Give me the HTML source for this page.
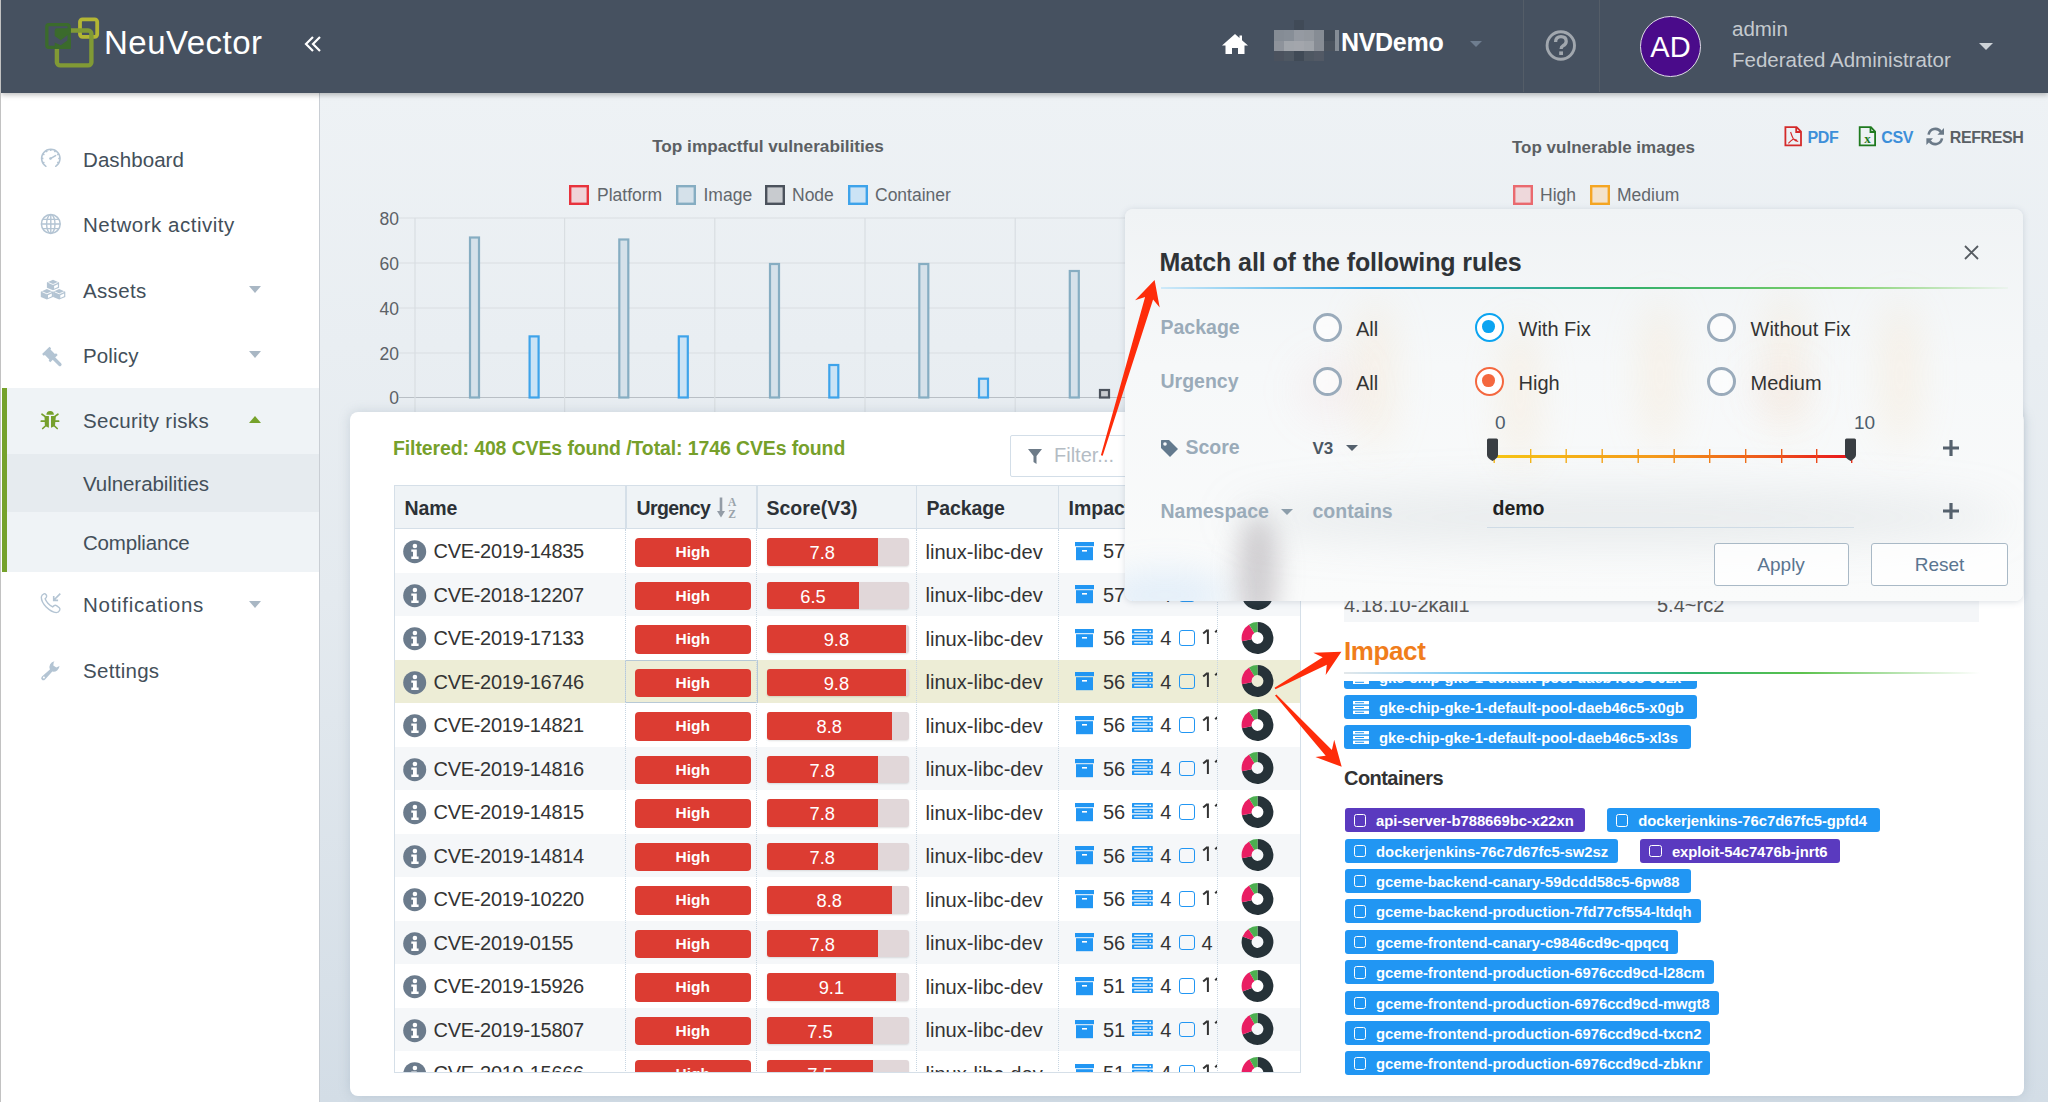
<!DOCTYPE html>
<html><head><meta charset="utf-8">
<style>
*{box-sizing:border-box;margin:0;padding:0}
html,body{width:2048px;height:1102px;overflow:hidden}
body{position:relative;font-family:"Liberation Sans",sans-serif;background:#fff;color:#333}
.a{position:absolute;white-space:nowrap}
#main{left:319px;top:92px;width:1729px;height:1010px;background:linear-gradient(#eef2f5 0%,#e4eaef 50%,#d3dde6 100%)}
#side{left:0;top:92px;width:320px;height:1010px;background:#fff;border-right:1.5px solid #c9ced4}
#side .edge{display:none}
#hdr{left:1.4px;top:0;width:2047px;height:92.6px;background:#465160;box-shadow:0 2px 5px rgba(0,0,0,.25)}
.nav{font-size:20.5px;color:#434f5a}
.caret{width:0;height:0;border-left:6px solid transparent;border-right:6px solid transparent;border-top:7px solid #a9b7c4}
</style></head>
<body>
<div id="main" class="a"></div>
<svg class="a" style="left:0;top:0" width="2048" height="1102">
<line x1="399" y1="218" x2="1300" y2="218" stroke="#d9dee2" stroke-width="1.2"/>
<text x="399" y="224.5" text-anchor="end" font-family="Liberation Sans" font-size="17.5" fill="#5c6166">80</text>
<line x1="399" y1="263" x2="1300" y2="263" stroke="#d9dee2" stroke-width="1.2"/>
<text x="399" y="269.5" text-anchor="end" font-family="Liberation Sans" font-size="17.5" fill="#5c6166">60</text>
<line x1="399" y1="308" x2="1300" y2="308" stroke="#d9dee2" stroke-width="1.2"/>
<text x="399" y="314.5" text-anchor="end" font-family="Liberation Sans" font-size="17.5" fill="#5c6166">40</text>
<line x1="399" y1="353" x2="1300" y2="353" stroke="#d9dee2" stroke-width="1.2"/>
<text x="399" y="359.5" text-anchor="end" font-family="Liberation Sans" font-size="17.5" fill="#5c6166">20</text>
<line x1="399" y1="397.5" x2="1300" y2="397.5" stroke="#b9bfc5" stroke-width="1.2"/>
<text x="399" y="404.0" text-anchor="end" font-family="Liberation Sans" font-size="17.5" fill="#5c6166">0</text>
<line x1="415" y1="218" x2="415" y2="412" stroke="#d9dee2" stroke-width="1.2"/>
<line x1="564.6" y1="218" x2="564.6" y2="412" stroke="#d9dee2" stroke-width="1.2"/>
<line x1="714.8" y1="218" x2="714.8" y2="412" stroke="#d9dee2" stroke-width="1.2"/>
<line x1="865" y1="218" x2="865" y2="412" stroke="#d9dee2" stroke-width="1.2"/>
<line x1="1015.2" y1="218" x2="1015.2" y2="412" stroke="#d9dee2" stroke-width="1.2"/>
<line x1="1165.4" y1="218" x2="1165.4" y2="412" stroke="#d9dee2" stroke-width="1.2"/>
<rect x="470" y="237.5" width="9" height="160.0" fill="#d5e1ea" stroke="#86adc2" stroke-width="2.2"/>
<rect x="619.3" y="239.5" width="9" height="158.0" fill="#d5e1ea" stroke="#86adc2" stroke-width="2.2"/>
<rect x="770" y="264" width="9" height="133.5" fill="#d5e1ea" stroke="#86adc2" stroke-width="2.2"/>
<rect x="919.3" y="264" width="9" height="133.5" fill="#d5e1ea" stroke="#86adc2" stroke-width="2.2"/>
<rect x="1069.8" y="271" width="9" height="126.5" fill="#d5e1ea" stroke="#86adc2" stroke-width="2.2"/>
<rect x="529.6" y="336.4" width="9" height="61.10000000000002" fill="#cbe3f5" stroke="#3ea3ea" stroke-width="2.2"/>
<rect x="678.8" y="336.4" width="9" height="61.10000000000002" fill="#cbe3f5" stroke="#3ea3ea" stroke-width="2.2"/>
<rect x="829.3" y="365" width="9" height="32.5" fill="#cbe3f5" stroke="#3ea3ea" stroke-width="2.2"/>
<rect x="979" y="378.7" width="9" height="18.80000000000001" fill="#cbe3f5" stroke="#3ea3ea" stroke-width="2.2"/>
<rect x="1100" y="390" width="9" height="7.5" fill="#c8cbcf" stroke="#4b525c" stroke-width="2.2"/>
<text x="768" y="151.8" text-anchor="middle" font-family="Liberation Sans" font-weight="700" font-size="17.2" fill="#5b5f63">Top impactful vulnerabilities</text>
<rect x="570.2" y="186.2" width="17.6" height="17.6" fill="#efd3d8" stroke="#e8333d" stroke-width="2.4"/>
<text x="597" y="200.5" font-family="Liberation Sans" font-size="17.5" fill="#62676c">Platform</text>
<rect x="677.2" y="186.2" width="17.6" height="17.6" fill="#d5e1ea" stroke="#86adc2" stroke-width="2.4"/>
<text x="703.5" y="200.5" font-family="Liberation Sans" font-size="17.5" fill="#62676c">Image</text>
<rect x="766.2" y="186.2" width="17.6" height="17.6" fill="#c8cbcf" stroke="#4b525c" stroke-width="2.4"/>
<text x="792" y="200.5" font-family="Liberation Sans" font-size="17.5" fill="#62676c">Node</text>
<rect x="849.2" y="186.2" width="17.6" height="17.6" fill="#cbe3f5" stroke="#3ea3ea" stroke-width="2.4"/>
<text x="875" y="200.5" font-family="Liberation Sans" font-size="17.5" fill="#62676c">Container</text>
<text x="1512" y="152.5" font-family="Liberation Sans" font-weight="700" font-size="17" fill="#5b5f63">Top vulnerable images</text>
<rect x="1514.2" y="186.2" width="17.6" height="17.6" fill="#eed8db" stroke="#ea6a6f" stroke-width="2.4"/>
<text x="1540" y="200.5" font-family="Liberation Sans" font-size="17.5" fill="#62676c">High</text>
<rect x="1591.2" y="186.2" width="17.6" height="17.6" fill="#f3e2cb" stroke="#f5a623" stroke-width="2.4"/>
<text x="1617" y="200.5" font-family="Liberation Sans" font-size="17.5" fill="#62676c">Medium</text>
<g fill="none" stroke="#d42a2a" stroke-width="1.8"><path d="M1785.4 127.2 H1796.6 L1801 131.6 V145.3 H1785.4 Z"/><path d="M1796.2 127.2 V132 H1801"/></g>
<path d="M1790.6 132 Q1791.8 136 1793.4 139 Q1795.2 141.4 1798.2 141.4 M1793.4 139 Q1790.8 140.6 1788.4 143.4 M1793.4 139 L1797 140.2" fill="none" stroke="#d42a2a" stroke-width="1.1"/>
<text x="1807.5" y="143.4" font-family="Liberation Sans" font-weight="700" font-size="16" letter-spacing="-0.4" fill="#3d8fd9">PDF</text>
<g fill="none" stroke="#1f7a1f" stroke-width="1.8"><path d="M1859.7 127.2 H1870.9 L1875.1 131.6 V145.3 H1859.7 Z"/><path d="M1870.5 127.2 V132 H1875.1"/></g>
<text x="1867.4" y="143" text-anchor="middle" font-family="Liberation Serif" font-weight="700" font-size="13" fill="#1f7a1f">x</text>
<text x="1881.3" y="143.4" font-family="Liberation Sans" font-weight="700" font-size="16" letter-spacing="-0.4" fill="#3d8fd9">CSV</text>
<g fill="none" stroke="#6b7a88" stroke-width="2.6"><path d="M1928.6 134.6 A6.8 6.8 0 0 1 1941 132"/><path d="M1942 138.4 A6.8 6.8 0 0 1 1929.6 141"/></g>
<path d="M1944 128 V134.8 H1937.4 Z" fill="#6b7a88"/><path d="M1926.4 145 V138.2 H1933 Z" fill="#6b7a88"/>
<text x="1949.8" y="143.4" font-family="Liberation Sans" font-weight="700" font-size="16" letter-spacing="-0.4" fill="#5a5f64">REFRESH</text>
</svg>
<div id="side" class="a">
  <div class="a edge"></div>
  <div class="a" style="left:2px;top:296px;width:317px;height:184px;background:#eff3f6"></div>
  <div class="a" style="left:2px;top:362px;width:317px;height:58px;background:#e6ebef"></div>
  <div class="a" style="left:2px;top:296px;width:5px;height:184px;background:#76a22b"></div>
  <svg class="a" style="left:0;top:-92px" width="80" height="720">
<path d="M45.92 166.30 A9.2 9.2 0 1 1 55.68 166.30" fill="none" stroke="#b3c4d3" stroke-width="1.5" stroke-linecap="round"/><line x1="42.83" y1="163.10" x2="44.39" y2="162.20" stroke="#b3c4d3" stroke-width="1.5"/><line x1="41.60" y1="158.50" x2="43.40" y2="158.50" stroke="#b3c4d3" stroke-width="1.5"/><line x1="42.83" y1="153.90" x2="44.39" y2="154.80" stroke="#b3c4d3" stroke-width="1.5"/><line x1="46.20" y1="150.53" x2="47.10" y2="152.09" stroke="#b3c4d3" stroke-width="1.5"/><line x1="50.80" y1="149.30" x2="50.80" y2="151.10" stroke="#b3c4d3" stroke-width="1.5"/><line x1="55.40" y1="150.53" x2="54.50" y2="152.09" stroke="#b3c4d3" stroke-width="1.5"/><line x1="58.77" y1="153.90" x2="57.21" y2="154.80" stroke="#b3c4d3" stroke-width="1.5"/><line x1="60.00" y1="158.50" x2="58.20" y2="158.50" stroke="#b3c4d3" stroke-width="1.5"/><line x1="58.77" y1="163.10" x2="57.21" y2="162.20" stroke="#b3c4d3" stroke-width="1.5"/><path d="M50.4 158.6 L55.6 155.6" stroke="#b3c4d3" stroke-width="1.6" stroke-linecap="round"/><circle cx="50.5" cy="158.5" r="1.3" fill="#b3c4d3"/>
<g transform="translate(50.8 224)"><circle cx="0" cy="0" r="9.4" fill="none" stroke="#b3c4d3" stroke-width="1.5"/><ellipse cx="0" cy="0" rx="4.2" ry="9.4" fill="none" stroke="#b3c4d3" stroke-width="1.4"/><path d="M-9.4 0 H9.4 M-8 -4.6 H8 M-8 4.6 H8 M0 -9.4 V9.4" stroke="#b3c4d3" stroke-width="1.4"/></g>
<path d="M53 279.7 L59.1 282.4 L59.1 287.7 L53 290.3 L46.9 287.7 L46.9 282.4 Z" fill="#b3c4d3"/><path d="M54.1 286.0 L57.9 284.3 L57.9 287.0 L54.1 288.7 Z" fill="#fff"/><path d="M48.4 282.5 L53 284.5 L57.6 282.5" fill="none" stroke="#fff" stroke-width=".9"/><path d="M46.9 289 L53.0 291.7 L53.0 297 L46.9 299.6 L40.8 297 L40.8 291.7 Z" fill="#b3c4d3"/><path d="M48.0 295.3 L51.8 293.6 L51.8 296.3 L48.0 298 Z" fill="#fff"/><path d="M42.3 291.8 L46.9 293.8 L51.5 291.8" fill="none" stroke="#fff" stroke-width=".9"/><path d="M59.2 289 L65.3 291.7 L65.3 297 L59.2 299.6 L53.1 297 L53.1 291.7 Z" fill="#b3c4d3"/><path d="M60.300000000000004 295.3 L64.10000000000001 293.6 L64.10000000000001 296.3 L60.300000000000004 298 Z" fill="#fff"/><path d="M54.6 291.8 L59.2 293.8 L63.800000000000004 291.8" fill="none" stroke="#fff" stroke-width=".9"/>
<g transform="translate(41.3 345.9)"><path d="M0.8 8.2 L8.2 0.8 L9.8 2.4 L9.2 3.6 L13.6 8 L14.8 7.4 L16.4 9 L9 16.4 L7.4 14.8 L8 13.6 L3.6 9.2 L2.4 9.8 Z" fill="#b3c4d3"/><path d="M12.6 12.6 L18.6 18.6" stroke="#b3c4d3" stroke-width="3.4" stroke-linecap="round"/></g>
<g fill="#76a02c"><path d="M46.4 414.7 A3.75 3.8 0 0 1 53.9 414.7 Z"/><path d="M44.5 416 H48.9 V427.7 L46 426.5 Q44.8 426 44.8 424.5 Z"/><path d="M55.9 416 H51 V427.7 L53.9 426.5 Q55.1 426 55.1 424.5 Z"/></g>
<g stroke="#76a02c" stroke-width="1.7" stroke-linecap="round"><path d="M42 414.2 L45.3 416.6 M41.3 421.2 H44.8 M42.7 428.5 L45.4 426 M57.9 414.2 L54.6 416.6 M58.6 421.2 H55.1 M57.2 428.5 L54.5 426"/></g>
<g transform="translate(40.7 593)"><path d="M3.2 0.8 Q1 1.6 0.6 4 Q0.6 9 5.5 14 Q10.8 19.2 15.6 19.6 Q18 19.4 19 17.2 Q19.6 15.8 18.6 14.8 L15.8 12.6 Q14.6 11.8 13.4 12.6 L12 13.8 Q9.2 12.4 7.2 10.2 Q5.4 8.2 4.4 5.8 L5.6 4.4 Q6.4 3.2 5.6 2 L4.4 0.8 Q3.8 0.4 3.2 0.8 Z" fill="none" stroke="#b3c4d3" stroke-width="1.4"/><path d="M19.6 0.6 L13 7.2 M13 3 V7.4 H17.4" fill="none" stroke="#b3c4d3" stroke-width="1.6"/></g>
<g transform="translate(40.7 661)"><path d="M13.8 0.3 A6 6 0 0 0 9.2 8.6 L1.2 15.6 Q-0.4 17.4 1.2 18.8 Q2.8 20 4.4 18.4 L11.6 10.6 A6 6 0 0 0 18.8 5 L15.6 6.6 L12.6 4.4 L13 1.4 Z" fill="#b3c4d3"/><circle cx="3.2" cy="16.6" r="1" fill="#fff"/></g>
</svg>
  <div class="a nav" style="left:83px;top:56px;letter-spacing:0.08px">Dashboard</div><div class="a nav" style="left:83px;top:121px;letter-spacing:0.52px">Network activity</div><div class="a nav" style="left:83px;top:187px;letter-spacing:0.33px">Assets</div><div class="a nav" style="left:83px;top:252px;letter-spacing:0.15px">Policy</div><div class="a nav" style="left:83px;top:317px;letter-spacing:0.29px">Security risks</div><div class="a nav" style="left:83px;top:380px;letter-spacing:-0.06px">Vulnerabilities</div><div class="a nav" style="left:83px;top:439px;letter-spacing:-0.18px">Compliance</div><div class="a nav" style="left:83px;top:501px;letter-spacing:0.72px">Notifications</div><div class="a nav" style="left:83px;top:567px;letter-spacing:0.29px">Settings</div>
  <div class="a caret" style="left:249px;top:194px"></div>
  <div class="a caret" style="left:249px;top:259px"></div>
  <div class="a caret" style="left:249px;top:324px;border-top:0;border-bottom:7px solid #76a22b"></div>
  <div class="a caret" style="left:249px;top:509px"></div>
</div>
<div id="hdr" class="a">
  <svg class="a" style="left:-1.4px;top:0" width="110" height="92">
    <rect x="80" y="19.3" width="17.2" height="17.5" rx="2.5" fill="none" stroke="#b3b634" stroke-width="3.8"/>
    <rect x="56.9" y="30.5" width="34.5" height="34.9" rx="3.2" fill="none" stroke="#819a35" stroke-width="4.4"/>
    <rect x="46.85" y="24.55" width="22.3" height="22.8" rx="2" fill="#465160" stroke="#3b6b2c" stroke-width="3.3"/>
    <path d="M54.7 30.5 Q54.7 28.3 56.9 28.3 L70.8 28.3 L70.8 32.7 L60.7 40.3 L54.7 36 Z" fill="#3b6b2c"/>
    <path d="M54.7 42.5 L60.7 45.2 L70.8 38.1 L70.8 49 L54.7 49 Z" fill="#3b6b2c"/>
  </svg>
  <div class="a" style="left:102.6px;top:23.5px;font-size:33px;color:#fff;letter-spacing:.5px">NeuVector</div>
  <svg class="a" style="left:301.6px;top:35px" width="20" height="18"><path d="M10 2 L3 9 L10 16 M17 2 L10 9 L17 16" fill="none" stroke="#fff" stroke-width="2.2"/></svg>
  <svg class="a" style="left:1219.6px;top:33px" width="28" height="22"><path d="M14 1 L1 12.5 L4.5 12.5 L4.5 21 L11 21 L11 15 L17 15 L17 21 L23.5 21 L23.5 12.5 L27 12.5 L21 7.2 L21 2.5 L18.5 2.5 L18.5 5 Z" fill="#fff"/></svg>
  <div class="a" style="left:-1.4px;top:0;filter:blur(.6px)"><div class="a" style="left:1273.6px;top:30.4px;width:10.3px;height:10.8px;background:#858c95"></div><div class="a" style="left:1283.6px;top:30.4px;width:10.7px;height:10.8px;background:#878e97"></div><div class="a" style="left:1294px;top:30.4px;width:10.3px;height:10.8px;background:#959aa2"></div><div class="a" style="left:1304px;top:30.4px;width:10.7px;height:10.8px;background:#93989f"></div><div class="a" style="left:1314.4px;top:30.4px;width:10.3px;height:10.8px;background:#868c94"></div><div class="a" style="left:1324.4px;top:30.4px;width:10.3px;height:10.8px;background:#434c58"></div><div class="a" style="left:1273.6px;top:40.9px;width:10.3px;height:10.7px;background:#8e939b"></div><div class="a" style="left:1283.6px;top:40.9px;width:10.7px;height:10.7px;background:#a1a5ab"></div><div class="a" style="left:1294px;top:40.9px;width:10.3px;height:10.7px;background:#a3a6ac"></div><div class="a" style="left:1304px;top:40.9px;width:10.7px;height:10.7px;background:#9fa3a9"></div><div class="a" style="left:1314.4px;top:40.9px;width:10.3px;height:10.7px;background:#878c94"></div><div class="a" style="left:1324.4px;top:40.9px;width:10.3px;height:10.7px;background:#4a525d"></div><div class="a" style="left:1273.6px;top:51.3px;width:10.3px;height:9.8px;background:#4b525e"></div><div class="a" style="left:1283.6px;top:51.3px;width:10.7px;height:9.8px;background:#4e5762"></div><div class="a" style="left:1294px;top:51.3px;width:10.3px;height:9.8px;background:#404a56"></div><div class="a" style="left:1304px;top:51.3px;width:10.7px;height:9.8px;background:#4e5762"></div><div class="a" style="left:1314.4px;top:51.3px;width:10.3px;height:9.8px;background:#525965"></div><div class="a" style="left:1324.4px;top:51.3px;width:10.3px;height:9.8px;background:#465160"></div><div class="a" style="left:1294px;top:20px;width:10px;height:10.4px;background:#404a57"></div><div class="a" style="left:1334.9px;top:30.4px;width:3.8px;height:20.5px;background:#858c95"></div></div>
  <div class="a" style="left:1339.6px;top:27.5px;font-size:25px;font-weight:700;color:#fff;letter-spacing:-.3px">NVDemo</div>
  <div class="a caret" style="left:1468.6px;top:41px;border-top-color:#6e7d8f;border-left-width:6.5px;border-right-width:6.5px;border-top-width:6px"></div>
  <div class="a" style="left:1521.6px;top:0;width:1.5px;height:92px;background:#545d68"></div>
  <div class="a" style="left:1597.6px;top:0;width:1.5px;height:92px;background:#545d68"></div>
  <svg class="a" style="left:1541.6px;top:28px" width="36" height="36"><circle cx="17.8" cy="17.5" r="13.7" fill="none" stroke="#a1a7ae" stroke-width="2.9"/><path d="M12.6 14 Q12.6 8.6 18 8.6 Q23.2 8.6 23.2 13.2 Q23.2 16.2 20 17.8 Q18.1 18.8 18.1 21" fill="none" stroke="#a1a7ae" stroke-width="3.3"/><rect x="16.2" y="23.4" width="3.8" height="3.6" fill="#a1a7ae"/></svg>
  <div class="a" style="left:1638.6px;top:16px;width:61px;height:61px;border-radius:50%;background:#4a0b8a;border:1.5px solid #e0dde6"></div>
  <div class="a" style="left:1638.6px;top:31px;width:61px;text-align:center;font-size:29px;color:#fff">AD</div>
  <div class="a" style="left:1730.6px;top:17px;font-size:20.5px;color:#c5cacf">admin</div>
  <div class="a" style="left:1730.6px;top:48px;font-size:20.5px;color:#c5cacf">Federated Administrator</div>
  <div class="a caret" style="left:1977.6px;top:43px;border-top-color:#cdd2d7;border-left-width:7px;border-right-width:7px;border-top-width:7px"></div>
</div>
<div class="a" style="left:349.5px;top:411.5px;width:1674px;height:684.5px;background:#fff;border-radius:8px;box-shadow:0 0 12px rgba(120,140,160,.28)"></div>
<div class="a" style="left:393px;top:437px;font-size:19.45px;letter-spacing:-.09px;font-weight:700;color:#76a02b">Filtered: 408 CVEs found /Total: 1746 CVEs found</div>
<div class="a" style="left:1010px;top:435px;width:140px;height:42px;border:1.5px solid #d3dee8;border-radius:2px;background:#fff"></div>
<svg class="a" style="left:1027px;top:448px" width="16" height="18"><path d="M1 1 H15 L9.5 8 V16 L6.5 14 V8 Z" fill="#6d7b88"/></svg>
<div class="a" style="left:1054px;top:444px;font-size:20px;color:#b4bcc4">Filter...</div>
<div class="a" style="left:393.5px;top:484.5px;width:907.0px;height:588.5px;overflow:hidden;border:1.5px solid #d5dfe8;background:#fff">
<div class="a" style="left:0;top:0;width:1000px;height:43.5px;background:#eff3f6;border-bottom:1.5px solid #d5dfe8"></div>
<div class="a" style="left:230.60000000000002px;top:0;width:1.5px;height:43.5px;background:#d5dfe8"></div>
<div class="a" style="left:361.6px;top:0;width:1.5px;height:43.5px;background:#d5dfe8"></div>
<div class="a" style="left:521.4px;top:0;width:1.5px;height:43.5px;background:#d5dfe8"></div>
<div class="a" style="left:663.4000000000001px;top:0;width:1.5px;height:43.5px;background:#d5dfe8"></div>
<div class="a" style="left:822.5px;top:0;width:1.5px;height:43.5px;background:#d5dfe8"></div>
<div class="a" style="left:10.0px;top:11.0px;font-size:19.5px;letter-spacing:-0.1px;font-weight:700;color:#2c3136">Name</div>
<div class="a" style="left:242.0px;top:11.0px;font-size:19.5px;letter-spacing:-0.6px;font-weight:700;color:#2c3136">Urgency</div>
<div class="a" style="left:372.0px;top:11.0px;font-size:19.5px;letter-spacing:0px;font-weight:700;color:#2c3136">Score(V3)</div>
<div class="a" style="left:532.0px;top:11.0px;font-size:19.5px;letter-spacing:-0.15px;font-weight:700;color:#2c3136">Package</div>
<div class="a" style="left:674.0px;top:11.0px;font-size:19.5px;letter-spacing:0px;font-weight:700;color:#2c3136">Impact</div>
<svg class="a" style="left:321.0px;top:10.0px" width="24" height="24"><path d="M5 1.5 V18" stroke="#939ca6" stroke-width="2.6"/><path d="M1 15 L5 21.5 L9 15 Z" fill="#939ca6"/><text x="16.2" y="10" text-anchor="middle" font-family="Liberation Serif" font-weight="700" font-size="11.5" fill="#9aa3ab">A</text><text x="16.2" y="21.5" text-anchor="middle" font-family="Liberation Serif" font-weight="700" font-size="11.5" fill="#9aa3ab">Z</text></svg>
<div class="a" style="left:0;top:43.5px;width:1000px;height:43.5px;background:#ffffff"></div>
<svg class="a" style="left:8.0px;top:54.75px" width="24" height="24"><circle cx="11.7" cy="11.7" r="11.5" fill="#6b7b8c"/><circle cx="11.9" cy="6" r="2.3" fill="#fff"/><path d="M8.3 9.4 H13.8 V16.6 H15.6 V19 H8.3 V16.6 H10 V11.8 H8.3 Z" fill="#fff"/></svg>
<div class="a" style="left:39.0px;top:54.75px;font-size:20px;letter-spacing:-.3px;color:#333">CVE-2019-14835</div>
<div class="a" style="left:240.5px;top:52.75px;width:115.5px;height:28.5px;background:#dc3c32;border-radius:4px;color:#fff;font-size:15.5px;font-weight:700;text-align:center;line-height:28.5px">High</div>
<div class="a" style="left:372.29999999999995px;top:52.75px;width:142px;height:27.5px;background:#e1d7d9;border-radius:3px;box-shadow:0 1px 2px rgba(0,0,0,.12);overflow:hidden"><div class="a" style="left:0;top:0;width:110.8px;height:27.5px;background:#dc3c32;color:#fff;font-size:18.3px;text-align:center;line-height:29px">7.8</div></div>
<div class="a" style="left:531.0px;top:55.25px;font-size:20.1px;color:#333">linux-libc-dev</div>
<svg class="a" style="left:680.0px;top:56.25px" width="20" height="19"><rect x="0" y="0" width="19" height="4.2" fill="#2196f3"/><rect x="1" y="5.2" width="17" height="13" fill="#2196f3"/><rect x="7" y="8" width="5" height="1.6" fill="#fff"/></svg>
<div class="a" style="left:708.5px;top:54.75px;font-size:20px;color:#333">57</div>
<svg class="a" style="left:737.2px;top:56.25px" width="21" height="17"><g fill="#2196f3"><rect x="0" y="0" width="20.8" height="4.5" rx=".6"/><rect x="0" y="5.8" width="20.8" height="4.5" rx=".6"/><rect x="0" y="11.5" width="20.8" height="4.5" rx=".6"/></g><g fill="#fff"><rect x="2.2" y="1.7" width="13.3" height="1.2"/><rect x="2.2" y="7.5" width="13.3" height="1.2"/><rect x="2.2" y="13.2" width="13.3" height="1.2"/><circle cx="18.2" cy="2.3" r=".9"/><circle cx="18.2" cy="8.1" r=".9"/><circle cx="18.2" cy="13.8" r=".9"/></g></svg>
<div class="a" style="left:765.8px;top:54.75px;font-size:20px;color:#333">4</div>
<div class="a" style="left:784.5px;top:57.75px;width:15.5px;height:15.5px;border:1.8px solid #2196f3;border-radius:3px"></div>
<svg class="a" style="left:807.0px;top:56.25px" width="15.5" height="16"><path d="M5.4 1 L1.2 4.6 M5.9 0.6 V15" fill="none" stroke="#333" stroke-width="2"/><path d="M15.4 1.2 L13.2 3.2" fill="none" stroke="#333" stroke-width="2"/></svg>
<svg class="a" style="left:845.0px;top:47.25px" width="36" height="36"><path d="M17.50 2.10 A15.9 15.9 0 1 1 1.95 21.31 L11.73 19.23 A5.9 5.9 0 1 0 17.50 12.10 Z" fill="#263238"/><path d="M1.95 21.31 A15.9 15.9 0 0 1 9.07 4.52 L14.37 13.00 A5.9 5.9 0 0 0 11.73 19.23 Z" fill="#e91e63"/><path d="M9.07 4.52 A15.9 15.9 0 0 1 17.50 2.10 L17.50 12.10 A5.9 5.9 0 0 0 14.37 13.00 Z" fill="#4caf50"/></svg>
<div class="a" style="left:0;top:87.0px;width:1000px;height:43.5px;background:#f5f7f9"></div>
<svg class="a" style="left:8.0px;top:98.25px" width="24" height="24"><circle cx="11.7" cy="11.7" r="11.5" fill="#6b7b8c"/><circle cx="11.9" cy="6" r="2.3" fill="#fff"/><path d="M8.3 9.4 H13.8 V16.6 H15.6 V19 H8.3 V16.6 H10 V11.8 H8.3 Z" fill="#fff"/></svg>
<div class="a" style="left:39.0px;top:98.25px;font-size:20px;letter-spacing:-.3px;color:#333">CVE-2018-12207</div>
<div class="a" style="left:240.5px;top:96.25px;width:115.5px;height:28.5px;background:#dc3c32;border-radius:4px;color:#fff;font-size:15.5px;font-weight:700;text-align:center;line-height:28.5px">High</div>
<div class="a" style="left:372.29999999999995px;top:96.25px;width:142px;height:27.5px;background:#e1d7d9;border-radius:3px;box-shadow:0 1px 2px rgba(0,0,0,.12);overflow:hidden"><div class="a" style="left:0;top:0;width:92.3px;height:27.5px;background:#dc3c32;color:#fff;font-size:18.3px;text-align:center;line-height:29px">6.5</div></div>
<div class="a" style="left:531.0px;top:98.75px;font-size:20.1px;color:#333">linux-libc-dev</div>
<svg class="a" style="left:680.0px;top:99.75px" width="20" height="19"><rect x="0" y="0" width="19" height="4.2" fill="#2196f3"/><rect x="1" y="5.2" width="17" height="13" fill="#2196f3"/><rect x="7" y="8" width="5" height="1.6" fill="#fff"/></svg>
<div class="a" style="left:708.5px;top:98.25px;font-size:20px;color:#333">57</div>
<svg class="a" style="left:737.2px;top:99.75px" width="21" height="17"><g fill="#2196f3"><rect x="0" y="0" width="20.8" height="4.5" rx=".6"/><rect x="0" y="5.8" width="20.8" height="4.5" rx=".6"/><rect x="0" y="11.5" width="20.8" height="4.5" rx=".6"/></g><g fill="#fff"><rect x="2.2" y="1.7" width="13.3" height="1.2"/><rect x="2.2" y="7.5" width="13.3" height="1.2"/><rect x="2.2" y="13.2" width="13.3" height="1.2"/><circle cx="18.2" cy="2.3" r=".9"/><circle cx="18.2" cy="8.1" r=".9"/><circle cx="18.2" cy="13.8" r=".9"/></g></svg>
<div class="a" style="left:765.8px;top:98.25px;font-size:20px;color:#333">4</div>
<div class="a" style="left:784.5px;top:101.25px;width:15.5px;height:15.5px;border:1.8px solid #2196f3;border-radius:3px"></div>
<svg class="a" style="left:807.0px;top:99.75px" width="15.5" height="16"><path d="M5.4 1 L1.2 4.6 M5.9 0.6 V15" fill="none" stroke="#333" stroke-width="2"/><path d="M15.4 1.2 L13.2 3.2" fill="none" stroke="#333" stroke-width="2"/></svg>
<svg class="a" style="left:845.0px;top:90.75px" width="36" height="36"><path d="M17.50 2.10 A15.9 15.9 0 1 1 1.95 21.31 L11.73 19.23 A5.9 5.9 0 1 0 17.50 12.10 Z" fill="#263238"/><path d="M1.95 21.31 A15.9 15.9 0 0 1 9.07 4.52 L14.37 13.00 A5.9 5.9 0 0 0 11.73 19.23 Z" fill="#e91e63"/><path d="M9.07 4.52 A15.9 15.9 0 0 1 17.50 2.10 L17.50 12.10 A5.9 5.9 0 0 0 14.37 13.00 Z" fill="#4caf50"/></svg>
<div class="a" style="left:0;top:130.5px;width:1000px;height:43.5px;background:#ffffff"></div>
<svg class="a" style="left:8.0px;top:141.75px" width="24" height="24"><circle cx="11.7" cy="11.7" r="11.5" fill="#6b7b8c"/><circle cx="11.9" cy="6" r="2.3" fill="#fff"/><path d="M8.3 9.4 H13.8 V16.6 H15.6 V19 H8.3 V16.6 H10 V11.8 H8.3 Z" fill="#fff"/></svg>
<div class="a" style="left:39.0px;top:141.75px;font-size:20px;letter-spacing:-.3px;color:#333">CVE-2019-17133</div>
<div class="a" style="left:240.5px;top:139.75px;width:115.5px;height:28.5px;background:#dc3c32;border-radius:4px;color:#fff;font-size:15.5px;font-weight:700;text-align:center;line-height:28.5px">High</div>
<div class="a" style="left:372.29999999999995px;top:139.75px;width:142px;height:27.5px;background:#e1d7d9;border-radius:3px;box-shadow:0 1px 2px rgba(0,0,0,.12);overflow:hidden"><div class="a" style="left:0;top:0;width:139.2px;height:27.5px;background:#dc3c32;color:#fff;font-size:18.3px;text-align:center;line-height:29px">9.8</div></div>
<div class="a" style="left:531.0px;top:142.25px;font-size:20.1px;color:#333">linux-libc-dev</div>
<svg class="a" style="left:680.0px;top:143.25px" width="20" height="19"><rect x="0" y="0" width="19" height="4.2" fill="#2196f3"/><rect x="1" y="5.2" width="17" height="13" fill="#2196f3"/><rect x="7" y="8" width="5" height="1.6" fill="#fff"/></svg>
<div class="a" style="left:708.5px;top:141.75px;font-size:20px;color:#333">56</div>
<svg class="a" style="left:737.2px;top:143.25px" width="21" height="17"><g fill="#2196f3"><rect x="0" y="0" width="20.8" height="4.5" rx=".6"/><rect x="0" y="5.8" width="20.8" height="4.5" rx=".6"/><rect x="0" y="11.5" width="20.8" height="4.5" rx=".6"/></g><g fill="#fff"><rect x="2.2" y="1.7" width="13.3" height="1.2"/><rect x="2.2" y="7.5" width="13.3" height="1.2"/><rect x="2.2" y="13.2" width="13.3" height="1.2"/><circle cx="18.2" cy="2.3" r=".9"/><circle cx="18.2" cy="8.1" r=".9"/><circle cx="18.2" cy="13.8" r=".9"/></g></svg>
<div class="a" style="left:765.8px;top:141.75px;font-size:20px;color:#333">4</div>
<div class="a" style="left:784.5px;top:144.75px;width:15.5px;height:15.5px;border:1.8px solid #2196f3;border-radius:3px"></div>
<svg class="a" style="left:807.0px;top:143.25px" width="15.5" height="16"><path d="M5.4 1 L1.2 4.6 M5.9 0.6 V15" fill="none" stroke="#333" stroke-width="2"/><path d="M15.4 1.2 L13.2 3.2" fill="none" stroke="#333" stroke-width="2"/></svg>
<svg class="a" style="left:845.0px;top:134.25px" width="36" height="36"><path d="M17.50 2.10 A15.9 15.9 0 1 1 1.95 21.31 L11.73 19.23 A5.9 5.9 0 1 0 17.50 12.10 Z" fill="#263238"/><path d="M1.95 21.31 A15.9 15.9 0 0 1 9.07 4.52 L14.37 13.00 A5.9 5.9 0 0 0 11.73 19.23 Z" fill="#e91e63"/><path d="M9.07 4.52 A15.9 15.9 0 0 1 17.50 2.10 L17.50 12.10 A5.9 5.9 0 0 0 14.37 13.00 Z" fill="#4caf50"/></svg>
<div class="a" style="left:0;top:174.0px;width:1000px;height:43.5px;background:#ededd6"></div>
<div class="a" style="left:230.60000000000002px;top:174.0px;width:132.5px;height:43.5px;border:1.5px solid #b7c9d6"></div>
<svg class="a" style="left:8.0px;top:185.25px" width="24" height="24"><circle cx="11.7" cy="11.7" r="11.5" fill="#6b7b8c"/><circle cx="11.9" cy="6" r="2.3" fill="#fff"/><path d="M8.3 9.4 H13.8 V16.6 H15.6 V19 H8.3 V16.6 H10 V11.8 H8.3 Z" fill="#fff"/></svg>
<div class="a" style="left:39.0px;top:185.25px;font-size:20px;letter-spacing:-.3px;color:#333">CVE-2019-16746</div>
<div class="a" style="left:240.5px;top:183.25px;width:115.5px;height:28.5px;background:#dc3c32;border-radius:4px;color:#fff;font-size:15.5px;font-weight:700;text-align:center;line-height:28.5px">High</div>
<div class="a" style="left:372.29999999999995px;top:183.25px;width:142px;height:27.5px;background:#e1d7d9;border-radius:3px;box-shadow:0 1px 2px rgba(0,0,0,.12);overflow:hidden"><div class="a" style="left:0;top:0;width:139.2px;height:27.5px;background:#dc3c32;color:#fff;font-size:18.3px;text-align:center;line-height:29px">9.8</div></div>
<div class="a" style="left:531.0px;top:185.75px;font-size:20.1px;color:#333">linux-libc-dev</div>
<svg class="a" style="left:680.0px;top:186.75px" width="20" height="19"><rect x="0" y="0" width="19" height="4.2" fill="#2196f3"/><rect x="1" y="5.2" width="17" height="13" fill="#2196f3"/><rect x="7" y="8" width="5" height="1.6" fill="#fff"/></svg>
<div class="a" style="left:708.5px;top:185.25px;font-size:20px;color:#333">56</div>
<svg class="a" style="left:737.2px;top:186.75px" width="21" height="17"><g fill="#2196f3"><rect x="0" y="0" width="20.8" height="4.5" rx=".6"/><rect x="0" y="5.8" width="20.8" height="4.5" rx=".6"/><rect x="0" y="11.5" width="20.8" height="4.5" rx=".6"/></g><g fill="#fff"><rect x="2.2" y="1.7" width="13.3" height="1.2"/><rect x="2.2" y="7.5" width="13.3" height="1.2"/><rect x="2.2" y="13.2" width="13.3" height="1.2"/><circle cx="18.2" cy="2.3" r=".9"/><circle cx="18.2" cy="8.1" r=".9"/><circle cx="18.2" cy="13.8" r=".9"/></g></svg>
<div class="a" style="left:765.8px;top:185.25px;font-size:20px;color:#333">4</div>
<div class="a" style="left:784.5px;top:188.25px;width:15.5px;height:15.5px;border:1.8px solid #2196f3;border-radius:3px"></div>
<svg class="a" style="left:807.0px;top:186.75px" width="15.5" height="16"><path d="M5.4 1 L1.2 4.6 M5.9 0.6 V15" fill="none" stroke="#333" stroke-width="2"/><path d="M15.4 1.2 L13.2 3.2" fill="none" stroke="#333" stroke-width="2"/></svg>
<svg class="a" style="left:845.0px;top:177.75px" width="36" height="36"><path d="M17.50 2.10 A15.9 15.9 0 1 1 1.95 21.31 L11.73 19.23 A5.9 5.9 0 1 0 17.50 12.10 Z" fill="#263238"/><path d="M1.95 21.31 A15.9 15.9 0 0 1 9.07 4.52 L14.37 13.00 A5.9 5.9 0 0 0 11.73 19.23 Z" fill="#e91e63"/><path d="M9.07 4.52 A15.9 15.9 0 0 1 17.50 2.10 L17.50 12.10 A5.9 5.9 0 0 0 14.37 13.00 Z" fill="#4caf50"/></svg>
<div class="a" style="left:0;top:217.5px;width:1000px;height:43.5px;background:#ffffff"></div>
<svg class="a" style="left:8.0px;top:228.75px" width="24" height="24"><circle cx="11.7" cy="11.7" r="11.5" fill="#6b7b8c"/><circle cx="11.9" cy="6" r="2.3" fill="#fff"/><path d="M8.3 9.4 H13.8 V16.6 H15.6 V19 H8.3 V16.6 H10 V11.8 H8.3 Z" fill="#fff"/></svg>
<div class="a" style="left:39.0px;top:228.75px;font-size:20px;letter-spacing:-.3px;color:#333">CVE-2019-14821</div>
<div class="a" style="left:240.5px;top:226.75px;width:115.5px;height:28.5px;background:#dc3c32;border-radius:4px;color:#fff;font-size:15.5px;font-weight:700;text-align:center;line-height:28.5px">High</div>
<div class="a" style="left:372.29999999999995px;top:226.75px;width:142px;height:27.5px;background:#e1d7d9;border-radius:3px;box-shadow:0 1px 2px rgba(0,0,0,.12);overflow:hidden"><div class="a" style="left:0;top:0;width:125.0px;height:27.5px;background:#dc3c32;color:#fff;font-size:18.3px;text-align:center;line-height:29px">8.8</div></div>
<div class="a" style="left:531.0px;top:229.25px;font-size:20.1px;color:#333">linux-libc-dev</div>
<svg class="a" style="left:680.0px;top:230.25px" width="20" height="19"><rect x="0" y="0" width="19" height="4.2" fill="#2196f3"/><rect x="1" y="5.2" width="17" height="13" fill="#2196f3"/><rect x="7" y="8" width="5" height="1.6" fill="#fff"/></svg>
<div class="a" style="left:708.5px;top:228.75px;font-size:20px;color:#333">56</div>
<svg class="a" style="left:737.2px;top:230.25px" width="21" height="17"><g fill="#2196f3"><rect x="0" y="0" width="20.8" height="4.5" rx=".6"/><rect x="0" y="5.8" width="20.8" height="4.5" rx=".6"/><rect x="0" y="11.5" width="20.8" height="4.5" rx=".6"/></g><g fill="#fff"><rect x="2.2" y="1.7" width="13.3" height="1.2"/><rect x="2.2" y="7.5" width="13.3" height="1.2"/><rect x="2.2" y="13.2" width="13.3" height="1.2"/><circle cx="18.2" cy="2.3" r=".9"/><circle cx="18.2" cy="8.1" r=".9"/><circle cx="18.2" cy="13.8" r=".9"/></g></svg>
<div class="a" style="left:765.8px;top:228.75px;font-size:20px;color:#333">4</div>
<div class="a" style="left:784.5px;top:231.75px;width:15.5px;height:15.5px;border:1.8px solid #2196f3;border-radius:3px"></div>
<svg class="a" style="left:807.0px;top:230.25px" width="15.5" height="16"><path d="M5.4 1 L1.2 4.6 M5.9 0.6 V15" fill="none" stroke="#333" stroke-width="2"/><path d="M15.4 1.2 L13.2 3.2" fill="none" stroke="#333" stroke-width="2"/></svg>
<svg class="a" style="left:845.0px;top:221.25px" width="36" height="36"><path d="M17.50 2.10 A15.9 15.9 0 1 1 1.95 21.31 L11.73 19.23 A5.9 5.9 0 1 0 17.50 12.10 Z" fill="#263238"/><path d="M1.95 21.31 A15.9 15.9 0 0 1 9.07 4.52 L14.37 13.00 A5.9 5.9 0 0 0 11.73 19.23 Z" fill="#e91e63"/><path d="M9.07 4.52 A15.9 15.9 0 0 1 17.50 2.10 L17.50 12.10 A5.9 5.9 0 0 0 14.37 13.00 Z" fill="#4caf50"/></svg>
<div class="a" style="left:0;top:261.0px;width:1000px;height:43.5px;background:#f5f7f9"></div>
<svg class="a" style="left:8.0px;top:272.25px" width="24" height="24"><circle cx="11.7" cy="11.7" r="11.5" fill="#6b7b8c"/><circle cx="11.9" cy="6" r="2.3" fill="#fff"/><path d="M8.3 9.4 H13.8 V16.6 H15.6 V19 H8.3 V16.6 H10 V11.8 H8.3 Z" fill="#fff"/></svg>
<div class="a" style="left:39.0px;top:272.25px;font-size:20px;letter-spacing:-.3px;color:#333">CVE-2019-14816</div>
<div class="a" style="left:240.5px;top:270.25px;width:115.5px;height:28.5px;background:#dc3c32;border-radius:4px;color:#fff;font-size:15.5px;font-weight:700;text-align:center;line-height:28.5px">High</div>
<div class="a" style="left:372.29999999999995px;top:270.25px;width:142px;height:27.5px;background:#e1d7d9;border-radius:3px;box-shadow:0 1px 2px rgba(0,0,0,.12);overflow:hidden"><div class="a" style="left:0;top:0;width:110.8px;height:27.5px;background:#dc3c32;color:#fff;font-size:18.3px;text-align:center;line-height:29px">7.8</div></div>
<div class="a" style="left:531.0px;top:272.75px;font-size:20.1px;color:#333">linux-libc-dev</div>
<svg class="a" style="left:680.0px;top:273.75px" width="20" height="19"><rect x="0" y="0" width="19" height="4.2" fill="#2196f3"/><rect x="1" y="5.2" width="17" height="13" fill="#2196f3"/><rect x="7" y="8" width="5" height="1.6" fill="#fff"/></svg>
<div class="a" style="left:708.5px;top:272.25px;font-size:20px;color:#333">56</div>
<svg class="a" style="left:737.2px;top:273.75px" width="21" height="17"><g fill="#2196f3"><rect x="0" y="0" width="20.8" height="4.5" rx=".6"/><rect x="0" y="5.8" width="20.8" height="4.5" rx=".6"/><rect x="0" y="11.5" width="20.8" height="4.5" rx=".6"/></g><g fill="#fff"><rect x="2.2" y="1.7" width="13.3" height="1.2"/><rect x="2.2" y="7.5" width="13.3" height="1.2"/><rect x="2.2" y="13.2" width="13.3" height="1.2"/><circle cx="18.2" cy="2.3" r=".9"/><circle cx="18.2" cy="8.1" r=".9"/><circle cx="18.2" cy="13.8" r=".9"/></g></svg>
<div class="a" style="left:765.8px;top:272.25px;font-size:20px;color:#333">4</div>
<div class="a" style="left:784.5px;top:275.25px;width:15.5px;height:15.5px;border:1.8px solid #2196f3;border-radius:3px"></div>
<svg class="a" style="left:807.0px;top:273.75px" width="15.5" height="16"><path d="M5.4 1 L1.2 4.6 M5.9 0.6 V15" fill="none" stroke="#333" stroke-width="2"/><path d="M15.4 1.2 L13.2 3.2" fill="none" stroke="#333" stroke-width="2"/></svg>
<svg class="a" style="left:845.0px;top:264.75px" width="36" height="36"><path d="M17.50 2.10 A15.9 15.9 0 1 1 1.95 21.31 L11.73 19.23 A5.9 5.9 0 1 0 17.50 12.10 Z" fill="#263238"/><path d="M1.95 21.31 A15.9 15.9 0 0 1 9.07 4.52 L14.37 13.00 A5.9 5.9 0 0 0 11.73 19.23 Z" fill="#e91e63"/><path d="M9.07 4.52 A15.9 15.9 0 0 1 17.50 2.10 L17.50 12.10 A5.9 5.9 0 0 0 14.37 13.00 Z" fill="#4caf50"/></svg>
<div class="a" style="left:0;top:304.5px;width:1000px;height:43.5px;background:#ffffff"></div>
<svg class="a" style="left:8.0px;top:315.75px" width="24" height="24"><circle cx="11.7" cy="11.7" r="11.5" fill="#6b7b8c"/><circle cx="11.9" cy="6" r="2.3" fill="#fff"/><path d="M8.3 9.4 H13.8 V16.6 H15.6 V19 H8.3 V16.6 H10 V11.8 H8.3 Z" fill="#fff"/></svg>
<div class="a" style="left:39.0px;top:315.75px;font-size:20px;letter-spacing:-.3px;color:#333">CVE-2019-14815</div>
<div class="a" style="left:240.5px;top:313.75px;width:115.5px;height:28.5px;background:#dc3c32;border-radius:4px;color:#fff;font-size:15.5px;font-weight:700;text-align:center;line-height:28.5px">High</div>
<div class="a" style="left:372.29999999999995px;top:313.75px;width:142px;height:27.5px;background:#e1d7d9;border-radius:3px;box-shadow:0 1px 2px rgba(0,0,0,.12);overflow:hidden"><div class="a" style="left:0;top:0;width:110.8px;height:27.5px;background:#dc3c32;color:#fff;font-size:18.3px;text-align:center;line-height:29px">7.8</div></div>
<div class="a" style="left:531.0px;top:316.25px;font-size:20.1px;color:#333">linux-libc-dev</div>
<svg class="a" style="left:680.0px;top:317.25px" width="20" height="19"><rect x="0" y="0" width="19" height="4.2" fill="#2196f3"/><rect x="1" y="5.2" width="17" height="13" fill="#2196f3"/><rect x="7" y="8" width="5" height="1.6" fill="#fff"/></svg>
<div class="a" style="left:708.5px;top:315.75px;font-size:20px;color:#333">56</div>
<svg class="a" style="left:737.2px;top:317.25px" width="21" height="17"><g fill="#2196f3"><rect x="0" y="0" width="20.8" height="4.5" rx=".6"/><rect x="0" y="5.8" width="20.8" height="4.5" rx=".6"/><rect x="0" y="11.5" width="20.8" height="4.5" rx=".6"/></g><g fill="#fff"><rect x="2.2" y="1.7" width="13.3" height="1.2"/><rect x="2.2" y="7.5" width="13.3" height="1.2"/><rect x="2.2" y="13.2" width="13.3" height="1.2"/><circle cx="18.2" cy="2.3" r=".9"/><circle cx="18.2" cy="8.1" r=".9"/><circle cx="18.2" cy="13.8" r=".9"/></g></svg>
<div class="a" style="left:765.8px;top:315.75px;font-size:20px;color:#333">4</div>
<div class="a" style="left:784.5px;top:318.75px;width:15.5px;height:15.5px;border:1.8px solid #2196f3;border-radius:3px"></div>
<svg class="a" style="left:807.0px;top:317.25px" width="15.5" height="16"><path d="M5.4 1 L1.2 4.6 M5.9 0.6 V15" fill="none" stroke="#333" stroke-width="2"/><path d="M15.4 1.2 L13.2 3.2" fill="none" stroke="#333" stroke-width="2"/></svg>
<svg class="a" style="left:845.0px;top:308.25px" width="36" height="36"><path d="M17.50 2.10 A15.9 15.9 0 1 1 1.95 21.31 L11.73 19.23 A5.9 5.9 0 1 0 17.50 12.10 Z" fill="#263238"/><path d="M1.95 21.31 A15.9 15.9 0 0 1 9.07 4.52 L14.37 13.00 A5.9 5.9 0 0 0 11.73 19.23 Z" fill="#e91e63"/><path d="M9.07 4.52 A15.9 15.9 0 0 1 17.50 2.10 L17.50 12.10 A5.9 5.9 0 0 0 14.37 13.00 Z" fill="#4caf50"/></svg>
<div class="a" style="left:0;top:348.0px;width:1000px;height:43.5px;background:#f5f7f9"></div>
<svg class="a" style="left:8.0px;top:359.25px" width="24" height="24"><circle cx="11.7" cy="11.7" r="11.5" fill="#6b7b8c"/><circle cx="11.9" cy="6" r="2.3" fill="#fff"/><path d="M8.3 9.4 H13.8 V16.6 H15.6 V19 H8.3 V16.6 H10 V11.8 H8.3 Z" fill="#fff"/></svg>
<div class="a" style="left:39.0px;top:359.25px;font-size:20px;letter-spacing:-.3px;color:#333">CVE-2019-14814</div>
<div class="a" style="left:240.5px;top:357.25px;width:115.5px;height:28.5px;background:#dc3c32;border-radius:4px;color:#fff;font-size:15.5px;font-weight:700;text-align:center;line-height:28.5px">High</div>
<div class="a" style="left:372.29999999999995px;top:357.25px;width:142px;height:27.5px;background:#e1d7d9;border-radius:3px;box-shadow:0 1px 2px rgba(0,0,0,.12);overflow:hidden"><div class="a" style="left:0;top:0;width:110.8px;height:27.5px;background:#dc3c32;color:#fff;font-size:18.3px;text-align:center;line-height:29px">7.8</div></div>
<div class="a" style="left:531.0px;top:359.75px;font-size:20.1px;color:#333">linux-libc-dev</div>
<svg class="a" style="left:680.0px;top:360.75px" width="20" height="19"><rect x="0" y="0" width="19" height="4.2" fill="#2196f3"/><rect x="1" y="5.2" width="17" height="13" fill="#2196f3"/><rect x="7" y="8" width="5" height="1.6" fill="#fff"/></svg>
<div class="a" style="left:708.5px;top:359.25px;font-size:20px;color:#333">56</div>
<svg class="a" style="left:737.2px;top:360.75px" width="21" height="17"><g fill="#2196f3"><rect x="0" y="0" width="20.8" height="4.5" rx=".6"/><rect x="0" y="5.8" width="20.8" height="4.5" rx=".6"/><rect x="0" y="11.5" width="20.8" height="4.5" rx=".6"/></g><g fill="#fff"><rect x="2.2" y="1.7" width="13.3" height="1.2"/><rect x="2.2" y="7.5" width="13.3" height="1.2"/><rect x="2.2" y="13.2" width="13.3" height="1.2"/><circle cx="18.2" cy="2.3" r=".9"/><circle cx="18.2" cy="8.1" r=".9"/><circle cx="18.2" cy="13.8" r=".9"/></g></svg>
<div class="a" style="left:765.8px;top:359.25px;font-size:20px;color:#333">4</div>
<div class="a" style="left:784.5px;top:362.25px;width:15.5px;height:15.5px;border:1.8px solid #2196f3;border-radius:3px"></div>
<svg class="a" style="left:807.0px;top:360.75px" width="15.5" height="16"><path d="M5.4 1 L1.2 4.6 M5.9 0.6 V15" fill="none" stroke="#333" stroke-width="2"/><path d="M15.4 1.2 L13.2 3.2" fill="none" stroke="#333" stroke-width="2"/></svg>
<svg class="a" style="left:845.0px;top:351.75px" width="36" height="36"><path d="M17.50 2.10 A15.9 15.9 0 1 1 1.95 21.31 L11.73 19.23 A5.9 5.9 0 1 0 17.50 12.10 Z" fill="#263238"/><path d="M1.95 21.31 A15.9 15.9 0 0 1 9.07 4.52 L14.37 13.00 A5.9 5.9 0 0 0 11.73 19.23 Z" fill="#e91e63"/><path d="M9.07 4.52 A15.9 15.9 0 0 1 17.50 2.10 L17.50 12.10 A5.9 5.9 0 0 0 14.37 13.00 Z" fill="#4caf50"/></svg>
<div class="a" style="left:0;top:391.5px;width:1000px;height:43.5px;background:#ffffff"></div>
<svg class="a" style="left:8.0px;top:402.75px" width="24" height="24"><circle cx="11.7" cy="11.7" r="11.5" fill="#6b7b8c"/><circle cx="11.9" cy="6" r="2.3" fill="#fff"/><path d="M8.3 9.4 H13.8 V16.6 H15.6 V19 H8.3 V16.6 H10 V11.8 H8.3 Z" fill="#fff"/></svg>
<div class="a" style="left:39.0px;top:402.75px;font-size:20px;letter-spacing:-.3px;color:#333">CVE-2019-10220</div>
<div class="a" style="left:240.5px;top:400.75px;width:115.5px;height:28.5px;background:#dc3c32;border-radius:4px;color:#fff;font-size:15.5px;font-weight:700;text-align:center;line-height:28.5px">High</div>
<div class="a" style="left:372.29999999999995px;top:400.75px;width:142px;height:27.5px;background:#e1d7d9;border-radius:3px;box-shadow:0 1px 2px rgba(0,0,0,.12);overflow:hidden"><div class="a" style="left:0;top:0;width:125.0px;height:27.5px;background:#dc3c32;color:#fff;font-size:18.3px;text-align:center;line-height:29px">8.8</div></div>
<div class="a" style="left:531.0px;top:403.25px;font-size:20.1px;color:#333">linux-libc-dev</div>
<svg class="a" style="left:680.0px;top:404.25px" width="20" height="19"><rect x="0" y="0" width="19" height="4.2" fill="#2196f3"/><rect x="1" y="5.2" width="17" height="13" fill="#2196f3"/><rect x="7" y="8" width="5" height="1.6" fill="#fff"/></svg>
<div class="a" style="left:708.5px;top:402.75px;font-size:20px;color:#333">56</div>
<svg class="a" style="left:737.2px;top:404.25px" width="21" height="17"><g fill="#2196f3"><rect x="0" y="0" width="20.8" height="4.5" rx=".6"/><rect x="0" y="5.8" width="20.8" height="4.5" rx=".6"/><rect x="0" y="11.5" width="20.8" height="4.5" rx=".6"/></g><g fill="#fff"><rect x="2.2" y="1.7" width="13.3" height="1.2"/><rect x="2.2" y="7.5" width="13.3" height="1.2"/><rect x="2.2" y="13.2" width="13.3" height="1.2"/><circle cx="18.2" cy="2.3" r=".9"/><circle cx="18.2" cy="8.1" r=".9"/><circle cx="18.2" cy="13.8" r=".9"/></g></svg>
<div class="a" style="left:765.8px;top:402.75px;font-size:20px;color:#333">4</div>
<div class="a" style="left:784.5px;top:405.75px;width:15.5px;height:15.5px;border:1.8px solid #2196f3;border-radius:3px"></div>
<svg class="a" style="left:807.0px;top:404.25px" width="15.5" height="16"><path d="M5.4 1 L1.2 4.6 M5.9 0.6 V15" fill="none" stroke="#333" stroke-width="2"/><path d="M15.4 1.2 L13.2 3.2" fill="none" stroke="#333" stroke-width="2"/></svg>
<svg class="a" style="left:845.0px;top:395.25px" width="36" height="36"><path d="M17.50 2.10 A15.9 15.9 0 1 1 1.95 21.31 L11.73 19.23 A5.9 5.9 0 1 0 17.50 12.10 Z" fill="#263238"/><path d="M1.95 21.31 A15.9 15.9 0 0 1 9.07 4.52 L14.37 13.00 A5.9 5.9 0 0 0 11.73 19.23 Z" fill="#e91e63"/><path d="M9.07 4.52 A15.9 15.9 0 0 1 17.50 2.10 L17.50 12.10 A5.9 5.9 0 0 0 14.37 13.00 Z" fill="#4caf50"/></svg>
<div class="a" style="left:0;top:435.0px;width:1000px;height:43.5px;background:#f5f7f9"></div>
<svg class="a" style="left:8.0px;top:446.25px" width="24" height="24"><circle cx="11.7" cy="11.7" r="11.5" fill="#6b7b8c"/><circle cx="11.9" cy="6" r="2.3" fill="#fff"/><path d="M8.3 9.4 H13.8 V16.6 H15.6 V19 H8.3 V16.6 H10 V11.8 H8.3 Z" fill="#fff"/></svg>
<div class="a" style="left:39.0px;top:446.25px;font-size:20px;letter-spacing:-.3px;color:#333">CVE-2019-0155</div>
<div class="a" style="left:240.5px;top:444.25px;width:115.5px;height:28.5px;background:#dc3c32;border-radius:4px;color:#fff;font-size:15.5px;font-weight:700;text-align:center;line-height:28.5px">High</div>
<div class="a" style="left:372.29999999999995px;top:444.25px;width:142px;height:27.5px;background:#e1d7d9;border-radius:3px;box-shadow:0 1px 2px rgba(0,0,0,.12);overflow:hidden"><div class="a" style="left:0;top:0;width:110.8px;height:27.5px;background:#dc3c32;color:#fff;font-size:18.3px;text-align:center;line-height:29px">7.8</div></div>
<div class="a" style="left:531.0px;top:446.75px;font-size:20.1px;color:#333">linux-libc-dev</div>
<svg class="a" style="left:680.0px;top:447.75px" width="20" height="19"><rect x="0" y="0" width="19" height="4.2" fill="#2196f3"/><rect x="1" y="5.2" width="17" height="13" fill="#2196f3"/><rect x="7" y="8" width="5" height="1.6" fill="#fff"/></svg>
<div class="a" style="left:708.5px;top:446.25px;font-size:20px;color:#333">56</div>
<svg class="a" style="left:737.2px;top:447.75px" width="21" height="17"><g fill="#2196f3"><rect x="0" y="0" width="20.8" height="4.5" rx=".6"/><rect x="0" y="5.8" width="20.8" height="4.5" rx=".6"/><rect x="0" y="11.5" width="20.8" height="4.5" rx=".6"/></g><g fill="#fff"><rect x="2.2" y="1.7" width="13.3" height="1.2"/><rect x="2.2" y="7.5" width="13.3" height="1.2"/><rect x="2.2" y="13.2" width="13.3" height="1.2"/><circle cx="18.2" cy="2.3" r=".9"/><circle cx="18.2" cy="8.1" r=".9"/><circle cx="18.2" cy="13.8" r=".9"/></g></svg>
<div class="a" style="left:765.8px;top:446.25px;font-size:20px;color:#333">4</div>
<div class="a" style="left:784.5px;top:449.25px;width:15.5px;height:15.5px;border:1.8px solid #2196f3;border-radius:3px"></div>
<div class="a" style="left:807.0px;top:446.25px;font-size:20px;color:#333">4</div>
<svg class="a" style="left:845.0px;top:438.75px" width="36" height="36"><path d="M17.50 2.10 A15.9 15.9 0 1 1 2.56 12.56 L11.96 15.98 A5.9 5.9 0 1 0 17.50 12.10 Z" fill="#263238"/><path d="M2.56 12.56 A15.9 15.9 0 0 1 8.38 4.98 L14.12 13.17 A5.9 5.9 0 0 0 11.96 15.98 Z" fill="#e91e63"/><path d="M8.38 4.98 A15.9 15.9 0 0 1 17.50 2.10 L17.50 12.10 A5.9 5.9 0 0 0 14.12 13.17 Z" fill="#4caf50"/></svg>
<div class="a" style="left:0;top:478.5px;width:1000px;height:43.5px;background:#ffffff"></div>
<svg class="a" style="left:8.0px;top:489.75px" width="24" height="24"><circle cx="11.7" cy="11.7" r="11.5" fill="#6b7b8c"/><circle cx="11.9" cy="6" r="2.3" fill="#fff"/><path d="M8.3 9.4 H13.8 V16.6 H15.6 V19 H8.3 V16.6 H10 V11.8 H8.3 Z" fill="#fff"/></svg>
<div class="a" style="left:39.0px;top:489.75px;font-size:20px;letter-spacing:-.3px;color:#333">CVE-2019-15926</div>
<div class="a" style="left:240.5px;top:487.75px;width:115.5px;height:28.5px;background:#dc3c32;border-radius:4px;color:#fff;font-size:15.5px;font-weight:700;text-align:center;line-height:28.5px">High</div>
<div class="a" style="left:372.29999999999995px;top:487.75px;width:142px;height:27.5px;background:#e1d7d9;border-radius:3px;box-shadow:0 1px 2px rgba(0,0,0,.12);overflow:hidden"><div class="a" style="left:0;top:0;width:129.2px;height:27.5px;background:#dc3c32;color:#fff;font-size:18.3px;text-align:center;line-height:29px">9.1</div></div>
<div class="a" style="left:531.0px;top:490.25px;font-size:20.1px;color:#333">linux-libc-dev</div>
<svg class="a" style="left:680.0px;top:491.25px" width="20" height="19"><rect x="0" y="0" width="19" height="4.2" fill="#2196f3"/><rect x="1" y="5.2" width="17" height="13" fill="#2196f3"/><rect x="7" y="8" width="5" height="1.6" fill="#fff"/></svg>
<div class="a" style="left:708.5px;top:489.75px;font-size:20px;color:#333">51</div>
<svg class="a" style="left:737.2px;top:491.25px" width="21" height="17"><g fill="#2196f3"><rect x="0" y="0" width="20.8" height="4.5" rx=".6"/><rect x="0" y="5.8" width="20.8" height="4.5" rx=".6"/><rect x="0" y="11.5" width="20.8" height="4.5" rx=".6"/></g><g fill="#fff"><rect x="2.2" y="1.7" width="13.3" height="1.2"/><rect x="2.2" y="7.5" width="13.3" height="1.2"/><rect x="2.2" y="13.2" width="13.3" height="1.2"/><circle cx="18.2" cy="2.3" r=".9"/><circle cx="18.2" cy="8.1" r=".9"/><circle cx="18.2" cy="13.8" r=".9"/></g></svg>
<div class="a" style="left:765.8px;top:489.75px;font-size:20px;color:#333">4</div>
<div class="a" style="left:784.5px;top:492.75px;width:15.5px;height:15.5px;border:1.8px solid #2196f3;border-radius:3px"></div>
<svg class="a" style="left:807.0px;top:491.25px" width="15.5" height="16"><path d="M5.4 1 L1.2 4.6 M5.9 0.6 V15" fill="none" stroke="#333" stroke-width="2"/><path d="M15.4 1.2 L13.2 3.2" fill="none" stroke="#333" stroke-width="2"/></svg>
<svg class="a" style="left:845.0px;top:482.25px" width="36" height="36"><path d="M17.50 2.10 A15.9 15.9 0 1 1 2.56 23.44 L11.96 20.02 A5.9 5.9 0 1 0 17.50 12.10 Z" fill="#263238"/><path d="M2.56 23.44 A15.9 15.9 0 0 1 9.55 4.23 L14.55 12.89 A5.9 5.9 0 0 0 11.96 20.02 Z" fill="#e91e63"/><path d="M9.55 4.23 A15.9 15.9 0 0 1 17.50 2.10 L17.50 12.10 A5.9 5.9 0 0 0 14.55 12.89 Z" fill="#4caf50"/></svg>
<div class="a" style="left:0;top:522.0px;width:1000px;height:43.5px;background:#f5f7f9"></div>
<svg class="a" style="left:8.0px;top:533.25px" width="24" height="24"><circle cx="11.7" cy="11.7" r="11.5" fill="#6b7b8c"/><circle cx="11.9" cy="6" r="2.3" fill="#fff"/><path d="M8.3 9.4 H13.8 V16.6 H15.6 V19 H8.3 V16.6 H10 V11.8 H8.3 Z" fill="#fff"/></svg>
<div class="a" style="left:39.0px;top:533.25px;font-size:20px;letter-spacing:-.3px;color:#333">CVE-2019-15807</div>
<div class="a" style="left:240.5px;top:531.25px;width:115.5px;height:28.5px;background:#dc3c32;border-radius:4px;color:#fff;font-size:15.5px;font-weight:700;text-align:center;line-height:28.5px">High</div>
<div class="a" style="left:372.29999999999995px;top:531.25px;width:142px;height:27.5px;background:#e1d7d9;border-radius:3px;box-shadow:0 1px 2px rgba(0,0,0,.12);overflow:hidden"><div class="a" style="left:0;top:0;width:106.5px;height:27.5px;background:#dc3c32;color:#fff;font-size:18.3px;text-align:center;line-height:29px">7.5</div></div>
<div class="a" style="left:531.0px;top:533.75px;font-size:20.1px;color:#333">linux-libc-dev</div>
<svg class="a" style="left:680.0px;top:534.75px" width="20" height="19"><rect x="0" y="0" width="19" height="4.2" fill="#2196f3"/><rect x="1" y="5.2" width="17" height="13" fill="#2196f3"/><rect x="7" y="8" width="5" height="1.6" fill="#fff"/></svg>
<div class="a" style="left:708.5px;top:533.25px;font-size:20px;color:#333">51</div>
<svg class="a" style="left:737.2px;top:534.75px" width="21" height="17"><g fill="#2196f3"><rect x="0" y="0" width="20.8" height="4.5" rx=".6"/><rect x="0" y="5.8" width="20.8" height="4.5" rx=".6"/><rect x="0" y="11.5" width="20.8" height="4.5" rx=".6"/></g><g fill="#fff"><rect x="2.2" y="1.7" width="13.3" height="1.2"/><rect x="2.2" y="7.5" width="13.3" height="1.2"/><rect x="2.2" y="13.2" width="13.3" height="1.2"/><circle cx="18.2" cy="2.3" r=".9"/><circle cx="18.2" cy="8.1" r=".9"/><circle cx="18.2" cy="13.8" r=".9"/></g></svg>
<div class="a" style="left:765.8px;top:533.25px;font-size:20px;color:#333">4</div>
<div class="a" style="left:784.5px;top:536.25px;width:15.5px;height:15.5px;border:1.8px solid #2196f3;border-radius:3px"></div>
<svg class="a" style="left:807.0px;top:534.75px" width="15.5" height="16"><path d="M5.4 1 L1.2 4.6 M5.9 0.6 V15" fill="none" stroke="#333" stroke-width="2"/><path d="M15.4 1.2 L13.2 3.2" fill="none" stroke="#333" stroke-width="2"/></svg>
<svg class="a" style="left:845.0px;top:525.75px" width="36" height="36"><path d="M17.50 2.10 A15.9 15.9 0 1 1 2.56 23.44 L11.96 20.02 A5.9 5.9 0 1 0 17.50 12.10 Z" fill="#263238"/><path d="M2.56 23.44 A15.9 15.9 0 0 1 9.55 4.23 L14.55 12.89 A5.9 5.9 0 0 0 11.96 20.02 Z" fill="#e91e63"/><path d="M9.55 4.23 A15.9 15.9 0 0 1 17.50 2.10 L17.50 12.10 A5.9 5.9 0 0 0 14.55 12.89 Z" fill="#4caf50"/></svg>
<div class="a" style="left:0;top:565.5px;width:1000px;height:43.5px;background:#ffffff"></div>
<svg class="a" style="left:8.0px;top:576.75px" width="24" height="24"><circle cx="11.7" cy="11.7" r="11.5" fill="#6b7b8c"/><circle cx="11.9" cy="6" r="2.3" fill="#fff"/><path d="M8.3 9.4 H13.8 V16.6 H15.6 V19 H8.3 V16.6 H10 V11.8 H8.3 Z" fill="#fff"/></svg>
<div class="a" style="left:39.0px;top:576.75px;font-size:20px;letter-spacing:-.3px;color:#333">CVE-2019-15666</div>
<div class="a" style="left:240.5px;top:574.75px;width:115.5px;height:28.5px;background:#dc3c32;border-radius:4px;color:#fff;font-size:15.5px;font-weight:700;text-align:center;line-height:28.5px">High</div>
<div class="a" style="left:372.29999999999995px;top:574.75px;width:142px;height:27.5px;background:#e1d7d9;border-radius:3px;box-shadow:0 1px 2px rgba(0,0,0,.12);overflow:hidden"><div class="a" style="left:0;top:0;width:106.5px;height:27.5px;background:#dc3c32;color:#fff;font-size:18.3px;text-align:center;line-height:29px">7.5</div></div>
<div class="a" style="left:531.0px;top:577.25px;font-size:20.1px;color:#333">linux-libc-dev</div>
<svg class="a" style="left:680.0px;top:578.25px" width="20" height="19"><rect x="0" y="0" width="19" height="4.2" fill="#2196f3"/><rect x="1" y="5.2" width="17" height="13" fill="#2196f3"/><rect x="7" y="8" width="5" height="1.6" fill="#fff"/></svg>
<div class="a" style="left:708.5px;top:576.75px;font-size:20px;color:#333">51</div>
<svg class="a" style="left:737.2px;top:578.25px" width="21" height="17"><g fill="#2196f3"><rect x="0" y="0" width="20.8" height="4.5" rx=".6"/><rect x="0" y="5.8" width="20.8" height="4.5" rx=".6"/><rect x="0" y="11.5" width="20.8" height="4.5" rx=".6"/></g><g fill="#fff"><rect x="2.2" y="1.7" width="13.3" height="1.2"/><rect x="2.2" y="7.5" width="13.3" height="1.2"/><rect x="2.2" y="13.2" width="13.3" height="1.2"/><circle cx="18.2" cy="2.3" r=".9"/><circle cx="18.2" cy="8.1" r=".9"/><circle cx="18.2" cy="13.8" r=".9"/></g></svg>
<div class="a" style="left:765.8px;top:576.75px;font-size:20px;color:#333">4</div>
<div class="a" style="left:784.5px;top:579.75px;width:15.5px;height:15.5px;border:1.8px solid #2196f3;border-radius:3px"></div>
<svg class="a" style="left:807.0px;top:578.25px" width="15.5" height="16"><path d="M5.4 1 L1.2 4.6 M5.9 0.6 V15" fill="none" stroke="#333" stroke-width="2"/><path d="M15.4 1.2 L13.2 3.2" fill="none" stroke="#333" stroke-width="2"/></svg>
<svg class="a" style="left:845.0px;top:569.25px" width="36" height="36"><path d="M17.50 2.10 A15.9 15.9 0 1 1 2.56 23.44 L11.96 20.02 A5.9 5.9 0 1 0 17.50 12.10 Z" fill="#263238"/><path d="M2.56 23.44 A15.9 15.9 0 0 1 9.55 4.23 L14.55 12.89 A5.9 5.9 0 0 0 11.96 20.02 Z" fill="#e91e63"/><path d="M9.55 4.23 A15.9 15.9 0 0 1 17.50 2.10 L17.50 12.10 A5.9 5.9 0 0 0 14.55 12.89 Z" fill="#4caf50"/></svg>
<div class="a" style="left:230.60000000000002px;top:43.5px;width:0;height:600px;border-left:1.5px dotted #c8d6e2"></div>
<div class="a" style="left:361.6px;top:43.5px;width:0;height:600px;border-left:1.5px dotted #c8d6e2"></div>
<div class="a" style="left:521.4px;top:43.5px;width:0;height:600px;border-left:1.5px dotted #c8d6e2"></div>
<div class="a" style="left:663.4000000000001px;top:43.5px;width:0;height:600px;border-left:1.5px dotted #c8d6e2"></div>
<div class="a" style="left:822.5px;top:43.5px;width:0;height:600px;border-left:1.5px dotted #c8d6e2"></div>
</div>
<div class="a" style="left:1344px;top:580px;width:635px;height:42px;background:#f4f6f8"></div>
<div class="a" style="left:1344px;top:594px;font-size:20px;color:#555">4.18.10-2kali1</div>
<div class="a" style="left:1657px;top:594px;font-size:20px;color:#555">5.4~rc2</div>
<div class="a" style="left:1344px;top:635.5px;font-size:26px;letter-spacing:-.4px;font-weight:700;color:#f07d1b">Impact</div>
<div class="a" style="left:1344px;top:672px;width:636px;height:2px;background:linear-gradient(90deg,#e4e8ea 0%,#9fd5f3 12%,#3cb4f0 30%,#2fb36a 55%,#5cc24d 72%,#d5efd0 92%,rgba(255,255,255,0) 100%)"></div>
<div class="a" style="left:1344px;top:681px;width:640px;height:80px;overflow:hidden">
<div class="a" style="left:0;top:-16.200000000000045px;width:353px;height:24px;background:#2196f3;border-radius:3px"><svg class="a" style="left:9px;top:6px" width="17" height="13"><g fill="#fff"><rect x="0" y="0" width="16" height="3.4"/><rect x="0" y="4.8" width="16" height="3.4"/><rect x="0" y="9.6" width="16" height="3.4"/></g><g fill="#2196f3"><rect x="2" y="1.2" width="9" height="1"/><rect x="2" y="6" width="9" height="1"/><rect x="2" y="10.8" width="9" height="1"/></g></svg><div class="a" style="left:35px;top:5px;font-size:14.85px;letter-spacing:-.05px;font-weight:700;color:#fff">gke-chip-gke-1-default-pool-daeb46c5-00zx</div></div>
<div class="a" style="left:0;top:13.799999999999955px;width:353px;height:24px;background:#2196f3;border-radius:3px"><svg class="a" style="left:9px;top:6px" width="17" height="13"><g fill="#fff"><rect x="0" y="0" width="16" height="3.4"/><rect x="0" y="4.8" width="16" height="3.4"/><rect x="0" y="9.6" width="16" height="3.4"/></g><g fill="#2196f3"><rect x="2" y="1.2" width="9" height="1"/><rect x="2" y="6" width="9" height="1"/><rect x="2" y="10.8" width="9" height="1"/></g></svg><div class="a" style="left:35px;top:5px;font-size:14.85px;letter-spacing:-.05px;font-weight:700;color:#fff">gke-chip-gke-1-default-pool-daeb46c5-x0gb</div></div>
<div class="a" style="left:0;top:44px;width:347px;height:24px;background:#2196f3;border-radius:3px"><svg class="a" style="left:9px;top:6px" width="17" height="13"><g fill="#fff"><rect x="0" y="0" width="16" height="3.4"/><rect x="0" y="4.8" width="16" height="3.4"/><rect x="0" y="9.6" width="16" height="3.4"/></g><g fill="#2196f3"><rect x="2" y="1.2" width="9" height="1"/><rect x="2" y="6" width="9" height="1"/><rect x="2" y="10.8" width="9" height="1"/></g></svg><div class="a" style="left:35px;top:5px;font-size:14.85px;letter-spacing:-.05px;font-weight:700;color:#fff">gke-chip-gke-1-default-pool-daeb46c5-xl3s</div></div>
</div>
<div class="a" style="left:1344px;top:767px;font-size:20px;letter-spacing:-.55px;font-weight:700;color:#333">Containers</div>
<div class="a" style="left:1344.6px;top:808px;width:240.4px;height:24.2px;background:#5a3abf;border-radius:3px"><div class="a" style="left:9px;top:6px;width:12.5px;height:12.5px;border:1.6px solid #fff;border-radius:2.5px"></div><div class="a" style="left:31.5px;top:5px;font-size:14.85px;letter-spacing:-.05px;font-weight:700;color:#fff">api-server-b788669bc-x22xn</div></div>
<div class="a" style="left:1606.8px;top:808px;width:272.8px;height:24.2px;background:#2196f3;border-radius:3px"><div class="a" style="left:9px;top:6px;width:12.5px;height:12.5px;border:1.6px solid #fff;border-radius:2.5px"></div><div class="a" style="left:31.5px;top:5px;font-size:14.85px;letter-spacing:-.05px;font-weight:700;color:#fff">dockerjenkins-76c7d67fc5-gpfd4</div></div>
<div class="a" style="left:1344.6px;top:838.5px;width:273.9px;height:24.2px;background:#2196f3;border-radius:3px"><div class="a" style="left:9px;top:6px;width:12.5px;height:12.5px;border:1.6px solid #fff;border-radius:2.5px"></div><div class="a" style="left:31.5px;top:5px;font-size:14.85px;letter-spacing:-.05px;font-weight:700;color:#fff">dockerjenkins-76c7d67fc5-sw2sz</div></div>
<div class="a" style="left:1640.4px;top:838.5px;width:200.1px;height:24.2px;background:#5a3abf;border-radius:3px"><div class="a" style="left:9px;top:6px;width:12.5px;height:12.5px;border:1.6px solid #fff;border-radius:2.5px"></div><div class="a" style="left:31.5px;top:5px;font-size:14.85px;letter-spacing:-.05px;font-weight:700;color:#fff">exploit-54c7476b-jnrt6</div></div>
<div class="a" style="left:1344.6px;top:868.8px;width:346.2px;height:24.2px;background:#2196f3;border-radius:3px"><div class="a" style="left:9px;top:6px;width:12.5px;height:12.5px;border:1.6px solid #fff;border-radius:2.5px"></div><div class="a" style="left:31.5px;top:5px;font-size:14.85px;letter-spacing:-.05px;font-weight:700;color:#fff">gceme-backend-canary-59dcdd58c5-6pw88</div></div>
<div class="a" style="left:1344.6px;top:899.2px;width:356.4px;height:24.2px;background:#2196f3;border-radius:3px"><div class="a" style="left:9px;top:6px;width:12.5px;height:12.5px;border:1.6px solid #fff;border-radius:2.5px"></div><div class="a" style="left:31.5px;top:5px;font-size:14.85px;letter-spacing:-.05px;font-weight:700;color:#fff">gceme-backend-production-7fd77cf554-ltdqh</div></div>
<div class="a" style="left:1344.6px;top:929.7px;width:333.4px;height:24.2px;background:#2196f3;border-radius:3px"><div class="a" style="left:9px;top:6px;width:12.5px;height:12.5px;border:1.6px solid #fff;border-radius:2.5px"></div><div class="a" style="left:31.5px;top:5px;font-size:14.85px;letter-spacing:-.05px;font-weight:700;color:#fff">gceme-frontend-canary-c9846cd9c-qpqcq</div></div>
<div class="a" style="left:1344.6px;top:960px;width:369.2px;height:24.2px;background:#2196f3;border-radius:3px"><div class="a" style="left:9px;top:6px;width:12.5px;height:12.5px;border:1.6px solid #fff;border-radius:2.5px"></div><div class="a" style="left:31.5px;top:5px;font-size:14.85px;letter-spacing:-.05px;font-weight:700;color:#fff">gceme-frontend-production-6976ccd9cd-l28cm</div></div>
<div class="a" style="left:1344.6px;top:990.6px;width:374.4px;height:24.2px;background:#2196f3;border-radius:3px"><div class="a" style="left:9px;top:6px;width:12.5px;height:12.5px;border:1.6px solid #fff;border-radius:2.5px"></div><div class="a" style="left:31.5px;top:5px;font-size:14.85px;letter-spacing:-.05px;font-weight:700;color:#fff">gceme-frontend-production-6976ccd9cd-mwgt8</div></div>
<div class="a" style="left:1344.6px;top:1021px;width:365.2px;height:24.2px;background:#2196f3;border-radius:3px"><div class="a" style="left:9px;top:6px;width:12.5px;height:12.5px;border:1.6px solid #fff;border-radius:2.5px"></div><div class="a" style="left:31.5px;top:5px;font-size:14.85px;letter-spacing:-.05px;font-weight:700;color:#fff">gceme-frontend-production-6976ccd9cd-txcn2</div></div>
<div class="a" style="left:1344.6px;top:1051.2px;width:365.2px;height:24.2px;background:#2196f3;border-radius:3px"><div class="a" style="left:9px;top:6px;width:12.5px;height:12.5px;border:1.6px solid #fff;border-radius:2.5px"></div><div class="a" style="left:31.5px;top:5px;font-size:14.85px;letter-spacing:-.05px;font-weight:700;color:#fff">gceme-frontend-production-6976ccd9cd-zbknr</div></div>
<div class="a" style="left:1124.5px;top:208.7px;width:898.5px;height:392.3px;border-radius:8px;background:linear-gradient(#f0f3f5 0%,#f6f8f9 40%,#fafbfb 100%);box-shadow:0 1px 6px rgba(90,110,130,.22);overflow:hidden">
<div class="a" style="left:230.5px;top:91.3px;width:40px;height:150px;background:rgba(250,205,140,.16);filter:blur(18px);border-radius:50%"></div>
<div class="a" style="left:375.5px;top:111.3px;width:40px;height:150px;background:rgba(250,205,140,.16);filter:blur(18px);border-radius:50%"></div>
<div class="a" style="left:515.5px;top:91.3px;width:40px;height:150px;background:rgba(250,205,140,.16);filter:blur(18px);border-radius:50%"></div>
<div class="a" style="left:640.5px;top:81.3px;width:40px;height:150px;background:rgba(250,205,140,.16);filter:blur(18px);border-radius:50%"></div>
<div class="a" style="left:755.5px;top:91.3px;width:40px;height:150px;background:rgba(250,205,140,.16);filter:blur(18px);border-radius:50%"></div>
<div class="a" style="left:175.5px;top:151.3px;width:60px;height:60px;background:rgba(240,170,170,.12);filter:blur(20px);border-radius:50%"></div>
<div class="a" style="left:625.5px;top:161.3px;width:60px;height:40px;background:rgba(240,170,170,.10);filter:blur(20px);border-radius:50%"></div>
<div class="a" style="left:105.5px;top:281.3px;width:780px;height:55px;background:rgba(150,160,170,.16);filter:blur(22px);border-radius:50%"></div>
<div class="a" style="left:113.5px;top:306.3px;width:40px;height:115px;background:rgba(110,100,108,.30);filter:blur(13px);border-radius:50%"></div>
<div class="a" style="left:-24.5px;top:361.3px;width:130px;height:50px;background:rgba(120,180,240,.16);filter:blur(16px);border-radius:50%"></div>
<div class="a" style="left:35.0px;top:39.3px;font-size:25px;font-weight:700;color:#2f3337;letter-spacing:-.1px">Match all of the following rules</div>
<svg class="a" style="left:838.5px;top:35.3px" width="17" height="17"><path d="M2 2 L15 15 M15 2 L2 15" stroke="#555b61" stroke-width="1.8"/></svg>
<div class="a" style="left:36.5px;top:78.8px;width:847px;height:2px;background:linear-gradient(90deg,#cfe9f8 0%,#2aa7e8 25%,#33b06a 55%,#7fd06a 80%,rgba(220,240,220,.3) 100%)"></div>
<div class="a" style="left:36.0px;top:107.3px;font-size:19.5px;font-weight:700;color:#9aabb9">Package</div>
<div class="a" style="left:36.0px;top:161.3px;font-size:19.5px;font-weight:700;color:#9aabb9">Urgency</div>
<div class="a" style="left:188.3px;top:104.3px;width:29px;height:29px;border-radius:50%;border:3px solid #9aabbb;background:rgba(255,255,255,.6)"></div>
<div class="a" style="left:231.5px;top:109.3px;font-size:20px;color:#333">All</div>
<div class="a" style="left:350.4px;top:104.3px;width:29px;height:29px;border-radius:50%;border:2.8px solid #0ba4f1;background:#fff"><div class="a" style="left:5.4px;top:5.4px;width:12.6px;height:12.6px;border-radius:50%;background:#0ba4f1"></div></div>
<div class="a" style="left:394.0px;top:109.3px;font-size:20px;color:#333">With Fix</div>
<div class="a" style="left:582.4px;top:104.3px;width:29px;height:29px;border-radius:50%;border:3px solid #9aabbb;background:rgba(255,255,255,.6)"></div>
<div class="a" style="left:626.0px;top:109.3px;font-size:20px;color:#333">Without Fix</div>
<div class="a" style="left:188.3px;top:158.3px;width:29px;height:29px;border-radius:50%;border:3px solid #9aabbb;background:rgba(255,255,255,.6)"></div>
<div class="a" style="left:231.5px;top:163.3px;font-size:20px;color:#333">All</div>
<div class="a" style="left:350.4px;top:158.3px;width:29px;height:29px;border-radius:50%;border:2.8px solid #f4683f;background:#fff"><div class="a" style="left:5.4px;top:5.4px;width:12.6px;height:12.6px;border-radius:50%;background:#f4683f"></div></div>
<div class="a" style="left:394.0px;top:163.3px;font-size:20px;color:#333">High</div>
<div class="a" style="left:582.4px;top:158.3px;width:29px;height:29px;border-radius:50%;border:3px solid #9aabbb;background:rgba(255,255,255,.6)"></div>
<div class="a" style="left:626.0px;top:163.3px;font-size:20px;color:#333">Medium</div>
<svg class="a" style="left:35.5px;top:230.3px" width="19" height="19"><path d="M1 1.5 Q1 1 1.5 1 H9 L18 10 L10 18 L1 9 Z" fill="#637a8e"/><circle cx="5" cy="5" r="1.8" fill="#f6f8fa"/></svg>
<div class="a" style="left:61.0px;top:227.3px;font-size:19.5px;font-weight:700;color:#9aabb9">Score</div>
<div class="a" style="left:188.0px;top:230.8px;font-size:17px;font-weight:700;color:#4b5763">V3</div>
<div class="a caret" style="left:221.5px;top:236.8px;border-top-color:#55616d;border-left-width:6px;border-right-width:6px;border-top-width:6.5px"></div>
<div class="a" style="left:370.5px;top:203.3px;font-size:19px;color:#4e5d6c">0</div>
<div class="a" style="left:729.5px;top:203.3px;font-size:19px;color:#4e5d6c">10</div>
<div class="a" style="left:368.0px;top:246.8px;width:358px;height:3px;background:linear-gradient(90deg,#f6c514,#f49a1a 45%,#ee5a1c 75%,#e8141c)"></div>
<svg class="a" style="left:368.0px;top:240.8px" width="362" height="16"><rect x="0.5" y="0" width="1.4" height="14" fill="#f2b51a"/><rect x="37.0" y="0" width="1.4" height="14" fill="#f2b51a"/><rect x="72.5" y="0" width="1.4" height="14" fill="#f2ac1a"/><rect x="108.5" y="0" width="1.4" height="14" fill="#f2a21a"/><rect x="144.5" y="0" width="1.4" height="14" fill="#f19a1a"/><rect x="180.5" y="0" width="1.4" height="14" fill="#f08e1a"/><rect x="216.0" y="0" width="1.4" height="14" fill="#ef7f1a"/><rect x="252.0" y="0" width="1.4" height="14" fill="#ee6f1a"/><rect x="288.0" y="0" width="1.4" height="14" fill="#ec5c1a"/><rect x="323.0" y="0" width="1.4" height="14" fill="#eb481a"/><rect x="358.0" y="0" width="1.4" height="14" fill="#e8301a"/></svg>
<svg class="a" style="left:361.5px;top:229.3px" width="13" height="24"><path d="M1 2 Q1 0.5 2.5 0.5 H10.5 Q12 0.5 12 2 V17 Q12 20 6.5 23 Q1 20 1 17 Z" fill="#393e43"/></svg>
<svg class="a" style="left:719.5px;top:229.3px" width="13" height="24"><path d="M1 2 Q1 0.5 2.5 0.5 H10.5 Q12 0.5 12 2 V17 Q12 20 6.5 23 Q1 20 1 17 Z" fill="#393e43"/></svg>
<svg class="a" style="left:817.5px;top:230.3px" width="18" height="18"><path d="M9 1 V17 M1 9 H17" stroke="#55616d" stroke-width="3.2"/></svg>
<svg class="a" style="left:817.5px;top:293.3px" width="18" height="18"><path d="M9 1 V17 M1 9 H17" stroke="#55616d" stroke-width="3.2"/></svg>
<div class="a" style="left:36.0px;top:291.3px;font-size:19.5px;font-weight:700;color:#9aabb9">Namespace</div>
<div class="a caret" style="left:156.0px;top:300.3px;border-top-color:#8c9daa;border-left-width:6px;border-right-width:6px;border-top-width:6.5px"></div>
<div class="a" style="left:188.0px;top:291.3px;font-size:19.5px;font-weight:700;color:#9aabb9">contains</div>
<div class="a" style="left:368.0px;top:288.8px;font-size:19.5px;font-weight:700;color:#222">demo</div>
<div class="a" style="left:362.5px;top:318.3px;width:367px;height:1.5px;background:#cfdbe5"></div>
<div class="a" style="left:589.1px;top:334.3px;width:135.0px;height:43.5px;border:1.5px solid #a9b9c6;border-radius:3px;background:rgba(255,255,255,.75);text-align:center;line-height:41px;font-size:19px;color:#5a7590">Apply</div>
<div class="a" style="left:746.5px;top:334.3px;width:137.0px;height:43.5px;border:1.5px solid #a9b9c6;border-radius:3px;background:rgba(255,255,255,.75);text-align:center;line-height:41px;font-size:19px;color:#5a7590">Reset</div>
</div>
<svg class="a" style="left:0;top:0" width="2048" height="1102">
<polygon points="1100.9,455.2 1145.1,297.0 1135.1,300.3 1154.6,280.0 1159.7,307.6 1153.1,299.4 1102.7,455.8" fill="#fe2c0a"/>
<polygon points="1274.6,687.7 1322.7,657.3 1313.3,652.7 1341.4,651.8 1325.7,675.1 1326.8,664.7 1275.4,689.3" fill="#fe2c0a"/>
<polygon points="1276.4,694.4 1331.9,750.0 1334.2,739.7 1341.7,766.8 1315.4,757.1 1325.7,755.7 1275.0,695.6" fill="#fe2c0a"/>
</svg>
<div class="a" style="left:0;top:0;width:1.4px;height:1102px;background:#c2c2c2"></div>
</body></html>
